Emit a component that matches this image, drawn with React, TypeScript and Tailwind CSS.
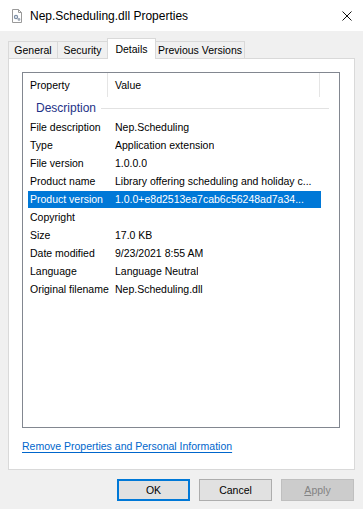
import React from "react";

const rows: [string, string][] = [
  ["File description", "Nep.Scheduling"],
  ["Type", "Application extension"],
  ["File version", "1.0.0.0"],
  ["Product name", "Library offering scheduling and holiday c..."],
  ["Product version", "1.0.0+e8d2513ea7cab6c56248ad7a34..."],
  ["Copyright", ""],
  ["Size", "17.0 KB"],
  ["Date modified", "9/23/2021 8:55 AM"],
  ["Language", "Language Neutral"],
  ["Original filename", "Nep.Scheduling.dll"],
];

function DllIcon() {
  return (
    <svg width="12" height="14" viewBox="0 0 12 14" className="shrink-0">
      <path d="M1.5 0.5h6l3 3v10h-9z" fill="#fff" stroke="#9a9a9a" />
      <path d="M7.5 0.5v3h3" fill="none" stroke="#9a9a9a" />
      <circle cx="5" cy="8" r="2.2" fill="#7d8fa6" />
      <circle cx="5" cy="8" r="0.9" fill="#fff" />
      <circle cx="8" cy="10.5" r="1.4" fill="#a0aab8" />
    </svg>
  );
}

export default function App() {
  return (
    <div className="w-[363px] h-[509px] bg-[#f0f0f0] flex flex-col overflow-hidden text-black font-['Liberation_Sans',Arial,sans-serif] text-[10.5px] leading-none">
      {/* Title bar */}
      <div className="h-[31px] bg-white flex items-center pl-[11px] pr-[11px] shrink-0">
        <DllIcon />
        <span className="ml-[7px] text-[12px] text-black">Nep.Scheduling.dll Properties</span>
        <svg width="10" height="10" viewBox="0 0 10 10" className="ml-auto">
          <path d="M0.5 0.5L9.5 9.5M9.5 0.5L0.5 9.5" stroke="#111" strokeWidth="1" />
        </svg>
      </div>

      {/* Body */}
      <div className="flex-1 flex flex-col px-[8px] pt-[7px]">
        {/* Tabs */}
        <div className="flex items-end h-[20px] relative z-10">
          <div className="w-[50px] h-[17px] border border-b-0 border-[#d9d9d9] bg-[#f0f0f0] flex items-center justify-center">
            General
          </div>
          <div className="w-[51px] h-[17px] -ml-px border border-b-0 border-[#d9d9d9] bg-[#f0f0f0] flex items-center justify-center">
            Security
          </div>
          <div className="w-[49px] h-[21px] -ml-px -mb-px border border-b-0 border-[#d9d9d9] bg-white flex items-start pt-[5px] justify-center">
            Details
          </div>
          <div className="w-[90px] h-[17px] -ml-px border border-b-0 border-[#d9d9d9] bg-[#f0f0f0] flex items-center justify-center">
            Previous Versions
          </div>
        </div>

        {/* Panel */}
        <div className="h-[412px] bg-white border border-[#d9d9d9] pl-[13px] pt-[13px] flex flex-col">
          <div className="w-[318px] h-[356px] border border-[#828790] flex flex-col">
            {/* header */}
            <div className="h-[24px] flex shrink-0">
              <div className="w-[85px] pl-[7px] flex items-center border-r border-[#e5e5e5]">Property</div>
              <div className="w-[212px] pl-[7px] flex items-center border-r border-[#e5e5e5]">Value</div>
            </div>
            {/* group */}
            <div className="h-[22px] flex items-center pl-[13px] pr-[10px]">
              <span className="text-[12px] text-[#1e3287]">Description</span>
              <div className="flex-1 h-px bg-[#e2e2e2] ml-[5px]" />
            </div>
            {rows.map(([k, v], i) => {
              const sel = i === 4;
              return (
                <div key={k} className="h-[18px] flex items-start">
                  <div
                    className={
                      "ml-[5px] w-[293px] h-[17px] flex items-center " +
                      (sel ? "bg-[#0078d7] text-white" : "")
                    }
                  >
                    <span className="w-[87px] pl-[2px] whitespace-nowrap">{k}</span>
                    <span className="whitespace-nowrap overflow-hidden">{v}</span>
                  </div>
                </div>
              );
            })}
          </div>
          <div className="mt-[13px] pl-0 -ml-[0px]">
            <span className="text-[#0066cc] underline underline-offset-2">Remove Properties and Personal Information</span>
          </div>
        </div>

        {/* Buttons */}
        <div className="flex justify-end gap-[9px] mt-[9px] pr-[1px]">
          <button className="w-[73px] h-[22px] bg-[#e1e1e1] border-2 border-[#0078d7] flex items-center justify-center">
            OK
          </button>
          <button className="w-[73px] h-[22px] bg-[#e1e1e1] border border-[#adadad] flex items-center justify-center">
            Cancel
          </button>
          <button className="w-[73px] h-[22px] bg-[#cccccc] border border-[#bfbfbf] text-[#838383] flex items-center justify-center">
            <span><span className="underline">A</span>pply</span>
          </button>
        </div>
      </div>
    </div>
  );
}
